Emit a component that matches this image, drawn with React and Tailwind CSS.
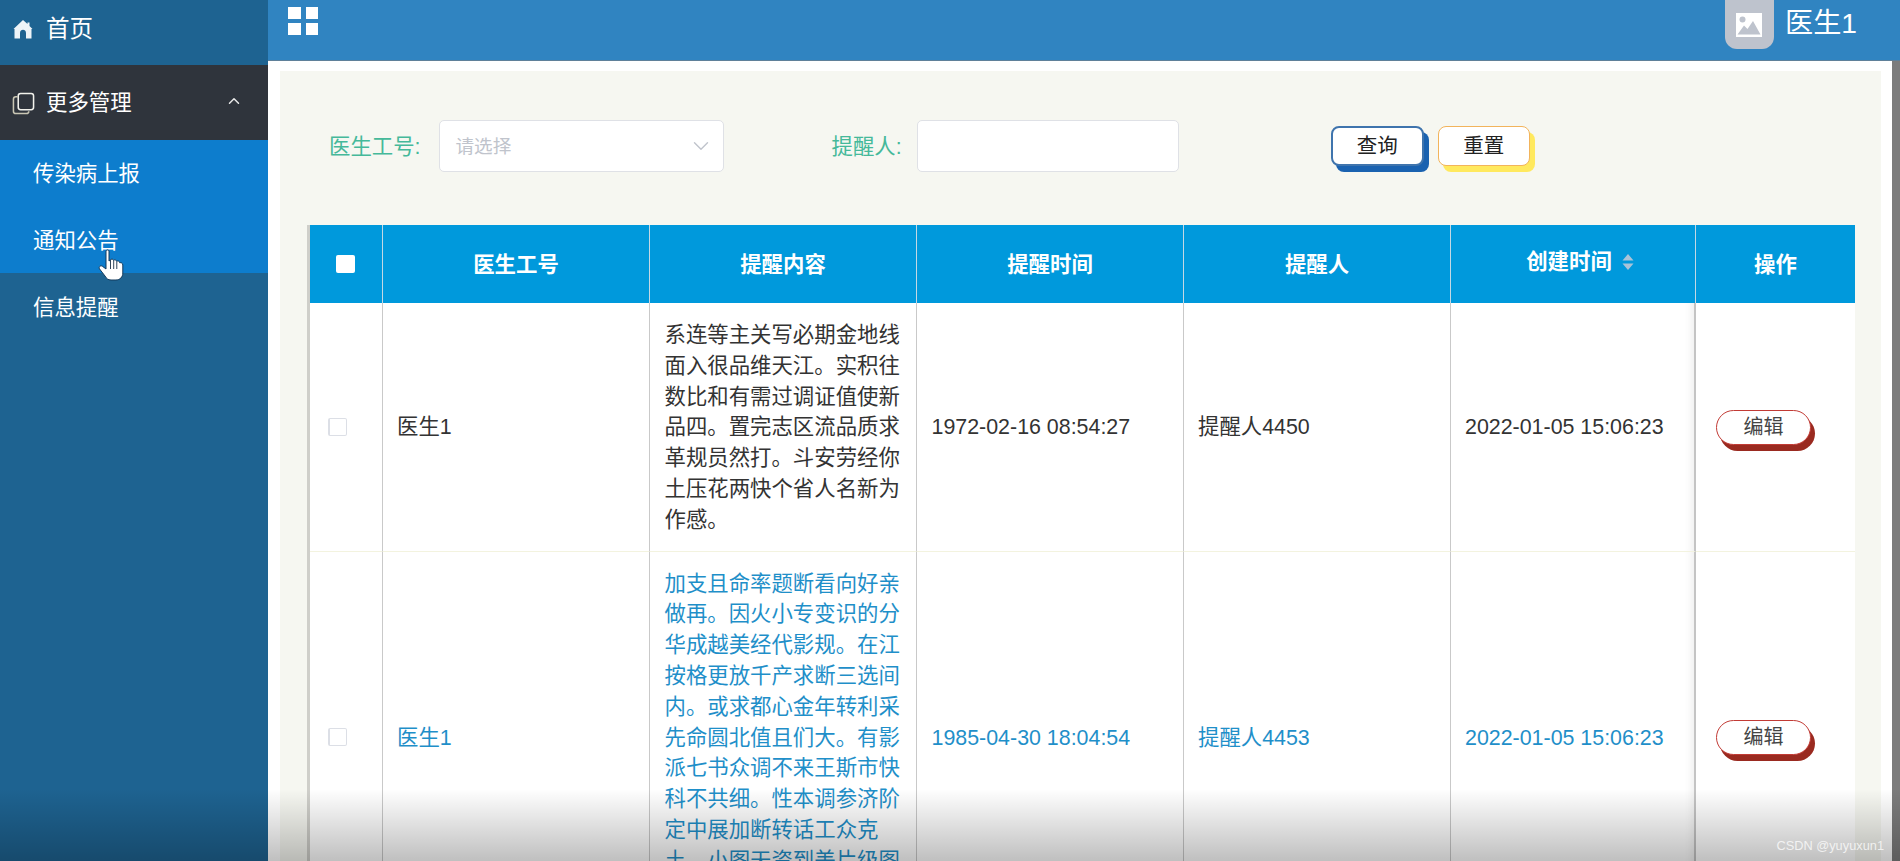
import { ChevronDown, ChevronUp } from 'lucide-react'

const font = "font-['Liberation_Sans','Noto_Sans_CJK_SC',sans-serif]"

const rows = [
  {
    id: 1,
    color: 'text-[#333333]',
    doctor: '医生1',
    content: '系连等主关写必期金地线面入很品维天江。实积往数比和有需过调证值使新品四。置完志区流品质求革规员然打。斗安劳经你土压花两快个省人名新为作感。',
    remindAt: '1972-02-16 08:54:27',
    person: '提醒人4450',
    createdAt: '2022-01-05 15:06:23',
  },
  {
    id: 2,
    color: 'text-[#1f8fc9]',
    doctor: '医生1',
    content: '加支且命率题断看向好亲做再。因火小专变识的分华成越美经代影规。在江按格更放千产求断三选间内。或求都心金年转利采先命圆北值且们大。有影派七书众调不来王斯市快科不共细。性本调参济阶定中展加断转话工众克土。小图天资到美片级图内容。',
    remindAt: '1985-04-30 18:04:54',
    person: '提醒人4453',
    createdAt: '2022-01-05 15:06:23',
  },
]

const HomeIcon = () => (
  <svg viewBox="0 0 20 19" className="w-5 h-[19px] fill-[#eef4f8]">
    <path d="M10 0 L14.5 4 V2.5 H16.5 V6 L19.5 9 H18.5 V18.5 H13 V13 C13 11 11.5 9.8 10 9.8 C8.5 9.8 7 11 7 13 V18.5 H1.5 V9 H0.5 Z" />
  </svg>
)

const CopyIcon = () => (
  <svg viewBox="0 0 24 24" className="w-[23px] h-[23px] fill-none stroke-[#f2f2ec] stroke-[1.6]">
    <rect x="6.5" y="1.5" width="16" height="17" rx="2.5" />
    <path d="M6 5 H4 C2.5 5 1.5 6 1.5 7.5 V20 C1.5 21.5 2.5 22.5 4 22.5 H15 C16.5 22.5 17.5 21.5 17.5 20" stroke="#c9c6b4" />
  </svg>
)

const HandCursor = () => (
  <svg viewBox="0 0 26 32" className="absolute left-[98px] top-[249px] w-[26px] h-[32px]">
    <path
      d="M8 2 C8 0.6 11 0.6 11 2 V12 L12.5 11 C13 9.6 15.4 9.8 15.5 11.5 C16.2 10.4 18.4 10.6 18.7 12.4 C19.6 11.6 21.6 12 21.8 13.8 C22.8 13.4 24.8 14 24.8 16 V24 C24.8 28 22 31 18 31 H13 C10 31 8.5 29.5 7 27 L1.6 20 C0.2 18 2.6 15.8 4.6 17.4 L8 20 Z"
      fill="#ffffff"
      stroke="#123a5c"
      strokeWidth="1"
    />
    <path d="M12.5 11 V20 M15.7 11.5 V20 M18.8 12.5 V20" stroke="#30455a" strokeWidth="1" fill="none" />
  </svg>
)

const SortIcon = () => (
  <svg viewBox="0 0 12 16" className="w-3 h-4 fill-[#a9c3d8]">
    <path d="M6 0 L11.5 6.5 H0.5 Z M6 16 L0.5 9.5 H11.5 Z" />
  </svg>
)

function Sidebar() {
  return (
    <aside className="w-[268px] shrink-0 bg-[#1e6391] text-white flex flex-col">
      <div className="h-[65px] flex items-center pl-[13px] pb-[6px] gap-[13px]">
        <HomeIcon />
        <span className="text-[23.5px]">首页</span>
      </div>
      <div className="h-[75px] bg-[#2f343c] flex items-center pl-3 pr-[25px] pt-[2px] gap-[11px]">
        <CopyIcon />
        <span className="text-[21.4px] flex-1">更多管理</span>
        <ChevronUp className="w-[18px] h-[18px] text-[#e8e8e8] -mt-[6px]" strokeWidth={2} />
      </div>
      <div className="h-[67px] bg-[#0d7dcd] flex items-center pl-[33px] pt-[2px] text-[21.4px]">传染病上报</div>
      <div className="h-[66px] bg-[#0d7dcd] flex items-center pl-[33px] pt-[2px] text-[21.4px]">通知公告</div>
      <div className="h-[67px] flex items-center pl-[33px] pt-[3px] text-[21.4px]">信息提醒</div>
    </aside>
  )
}

function Header() {
  return (
    <header className="h-[61px] shrink-0 bg-[#3084c1] border-b border-[#5f8099] flex items-start justify-between pl-5 pr-[43px]">
      <div className="grid grid-cols-2 gap-x-[5px] gap-y-1 mt-[7px]">
        <div className="w-[12.5px] h-3 bg-white"></div>
        <div className="w-[12.5px] h-3 bg-white"></div>
        <div className="w-[12.5px] h-3 bg-white"></div>
        <div className="w-[12.5px] h-3 bg-white"></div>
      </div>
      <div className="flex items-start gap-[11px]">
        <div className="w-[49px] h-[49px] bg-[#bec3cd] rounded-b-xl flex items-center justify-center">
          <svg viewBox="0 0 26 24" className="w-[26px] h-6">
            <rect width="26" height="24" fill="#ffffff" />
            <circle cx="6.5" cy="6.5" r="3" fill="#bec3cd" />
            <path d="M1.5 21.5 L8 12.5 L11.5 16 L17 8 L24.5 21.5 Z" fill="#bec3cd" />
          </svg>
        </div>
        <span className="text-[28.2px] text-white leading-[46px]">医生1</span>
      </div>
    </header>
  )
}

function SearchBar() {
  return (
    <div className="flex items-start pl-[22px]">
      <label className="h-[52px] pt-[2px] flex items-center text-[21.4px] text-[#45b99a] whitespace-nowrap">医生工号:</label>
      <div className="ml-[18px] w-[285px] h-[52px] bg-white border border-[#dfe1e6] rounded-[5px] flex items-center justify-between pl-4 pr-[9px]">
        <span className="text-[18.6px] pt-[2px] text-[#c0c4cc]">请选择</span>
        <ChevronDown className="w-[26px] h-[26px] text-[#c0c4cc]" strokeWidth={1.3} />
      </div>
      <label className="ml-[108px] h-[52px] pt-[2px] flex items-center text-[21.4px] text-[#45b99a] whitespace-nowrap">提醒人:</label>
      <input className="ml-[15px] w-[262px] h-[52px] bg-white border border-[#dfe1e6] rounded-[5px]" />
      <button className="ml-[152px] mt-[6px] w-[93px] h-[40px] bg-white border-2 border-[#3f74ad] rounded-lg text-[20.5px] text-[#222222] shadow-[5px_6px_0_#1a62b0]">查询</button>
      <button className="ml-[14px] mt-[6px] w-[92px] h-[40px] bg-white border-[1.5px] border-[#f2b45c] rounded-lg text-[20.5px] text-[#222222] shadow-[5px_6px_0_#ffe95e]">重置</button>
    </div>
  )
}

function DataTable() {
  return (
    <div className="mt-[53px] w-fit border-l-[3px] border-[#cfcfca] bg-white">
      <table className="w-[1545px] table-fixed border-separate border-spacing-0 text-[21.4px] leading-[30.8px]">
        <colgroup>
          <col className="w-[73px]" />
          <col className="w-[267px]" />
          <col className="w-[267px]" />
          <col className="w-[267px]" />
          <col className="w-[267px]" />
          <col className="w-[245px]" />
          <col className="w-[159px]" />
        </colgroup>
        <thead>
          <tr className="h-[78px] bg-[#0099dc] text-white font-bold">
            <th className="border-r border-[#c4d8e4] pr-px">
              <span className="block w-[19px] h-[18px] mx-auto bg-white rounded-[2px]"></span>
            </th>
            <th className="border-r border-[#c4d8e4] font-bold pt-[2px]">医生工号</th>
            <th className="border-r border-[#c4d8e4] font-bold pt-[2px]">提醒内容</th>
            <th className="border-r border-[#c4d8e4] font-bold pt-[2px]">提醒时间</th>
            <th className="border-r border-[#c4d8e4] font-bold pt-[2px]">提醒人</th>
            <th className="border-r border-[#c4d8e4] font-bold">
              <span className="flex items-center justify-center gap-[10px] pl-[14px] pb-[3px]">
                创建时间
                <SortIcon />
              </span>
            </th>
            <th className="font-bold pt-[2px]">操作</th>
          </tr>
        </thead>
        <tbody>
          {rows.map((row) => (
            <tr key={row.id} className={row.color}>
              <td className="border-r border-b border-r-[#c9c9c9] border-b-[#f3f3df]">
                <span className="block w-[19px] h-[18px] ml-[18px] bg-white border border-[#dcdfe6] border-l-2 rounded-[2px]"></span>
              </td>
              <td className="border-r border-b border-r-[#c9c9c9] border-b-[#f3f3df] pl-[14px] pr-[15px] pt-[17px] pb-[15px]">{row.doctor}</td>
              <td className="border-r border-b border-r-[#c9c9c9] border-b-[#f3f3df] pl-[14.5px] pr-[15px] pt-[17px] pb-[15px]">{row.content}</td>
              <td className="border-r border-b border-r-[#c9c9c9] border-b-[#f3f3df] pl-[14.5px] pr-[15px] pt-[17px] pb-[15px] whitespace-nowrap">{row.remindAt}</td>
              <td className="border-r border-b border-r-[#c9c9c9] border-b-[#f3f3df] pl-[14px] pr-[15px] pt-[17px] pb-[15px] whitespace-nowrap">{row.person}</td>
              <td className="border-r-2 border-b border-r-[#c4c4c4] border-b-[#f3f3df] pl-[14px] pr-[15px] pt-[17px] pb-[15px] whitespace-nowrap shadow-[inset_-10px_0_8px_-8px_rgba(0,0,0,0.08)]">{row.createdAt}</td>
              <td className="border-b border-b-[#f3f3df] pl-[20px] pt-[17px] pb-[15px]">
                <button className="block w-[95px] h-[35px] bg-white border-[1.5px] border-[#c23b35] rounded-full text-[20px] leading-[33px] text-[#444444] shadow-[4px_6px_0_#9a2a20]">编辑</button>
              </td>
            </tr>
          ))}
        </tbody>
      </table>
    </div>
  )
}

export default function App() {
  return (
    <div className={`relative h-screen w-screen overflow-hidden flex bg-white ${font}`}>
      <Sidebar />
      <main className="flex-1 min-w-0 flex flex-col">
        <Header />
        <div className="flex-1 min-h-0 flex">
          <div className="flex-1 min-w-0 pl-3 pr-[11px] pt-[10px]">
            <div className="h-full bg-[#f6f7f1] pl-[27px] pt-[49px] overflow-hidden">
              <SearchBar />
              <DataTable />
            </div>
          </div>
          <div className="w-2 bg-[#7c7c7c]"></div>
        </div>
      </main>
      <HandCursor />
      {/* 底部播放器的渐变阴影 */}
      <div className="absolute inset-x-0 bottom-0 h-[72px] bg-gradient-to-b from-transparent to-black/25 pointer-events-none"></div>
      <span className="absolute right-[16px] bottom-[6px] text-[12.8px] text-white/75">CSDN @yuyuxun1</span>
    </div>
  )
}
